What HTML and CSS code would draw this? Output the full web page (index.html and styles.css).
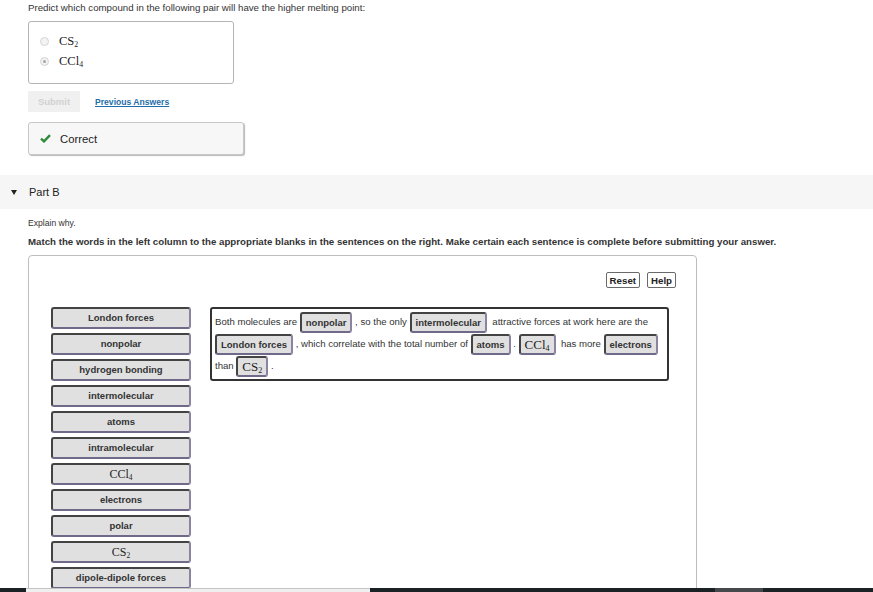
FILE: index.html
```html
<!DOCTYPE html>
<html lang="en">
<head>
    <meta charset="UTF-8">
    <title>Part B - Melting point</title>
    <link rel="stylesheet" href="styles.css">
</head>
<body>
    <div class="part-a">
        <p class="prompt">Predict which compound in the following pair will have the higher melting point:</p>

        <div class="choices">
            <div class="choice">
                <span class="radio"></span>
                <span class="chem">CS<sub>2</sub></span>
            </div>
            <div class="choice">
                <span class="radio checked"></span>
                <span class="chem">CCl<sub>4</sub></span>
            </div>
        </div>

        <div class="actions">
            <button class="submit" disabled>Submit</button>
            <a href="#" class="prev-link">Previous Answers</a>
        </div>

        <div class="feedback">
            <svg class="check" width="11" height="9" viewBox="0 0 11 9">
                <path d="M1 4.6 L4 7.4 L10 1.2" fill="none" stroke="#2f8a3c" stroke-width="2.4"/>
            </svg>
            <span>Correct</span>
        </div>
    </div>

    <div class="part-header">
        <span class="caret"></span>
        <span>Part B</span>
    </div>

    <div class="part-b">
        <p class="explain">Explain why.</p>
        <p class="instructions">Match the words in the left column to the appropriate blanks in the sentences on the right. Make certain each sentence is complete before submitting your answer.</p>

        <div class="match-area">
            <div class="toolbar">
                <button class="tool-btn">Reset</button>
                <button class="tool-btn">Help</button>
            </div>

            <div class="match-body">
                <div class="word-bank">
                    <div class="label">London forces</div>
                    <div class="label">nonpolar</div>
                    <div class="label">hydrogen bonding</div>
                    <div class="label">intermolecular</div>
                    <div class="label">atoms</div>
                    <div class="label">intramolecular</div>
                    <div class="label chem-label">CCl<sub>4</sub></div>
                    <div class="label">electrons</div>
                    <div class="label">polar</div>
                    <div class="label chem-label">CS<sub>2</sub></div>
                    <div class="label">dipole-dipole forces</div>
                </div>

                <div class="sentence">
                    Both molecules are <span class="blank">nonpolar</span> , so the only <span class="blank">intermolecular</span> &nbsp;attractive forces at work here are the
                    <span class="blank">London forces</span> , which correlate with the total number of <span class="blank">atoms</span> . <span class="blank chem-blank">CCl<sub>4</sub></span> &nbsp;has more <span class="blank">electrons</span>
                    than <span class="blank chem-blank">CS<sub>2</sub></span> .
                </div>
            </div>
        </div>
    </div>

    <div class="bottom-bar">
        <span class="seg dark" style="width: 26px"></span>
        <span class="seg light" style="width: 344px"></span>
        <span class="seg dark" style="width: 345px"></span>
        <span class="seg grey" style="width: 48px"></span>
        <span class="seg dark rest"></span>
    </div>
</body>
</html>
```

FILE: styles.css
```css
* {
    margin: 0;
    padding: 0;
    box-sizing: border-box;
}

body {
    font-family: 'Liberation Sans', Arial, sans-serif;
    color: #333333;
    background-color: #ffffff;
    overflow: hidden;
}

.part-a {
    padding: 2px 28px 0;
}

.prompt {
    font-size: 9.7px;
    line-height: 11px;
    color: #333333;
}

.choices {
    width: 206px;
    height: 63px;
    margin-top: 8px;
    border: 1px solid #b5b5b5;
    border-radius: 3px;
    padding: 9px 0 0 11px;
}

.choice {
    display: flex;
    align-items: center;
    height: 20px;
}

.radio {
    width: 9px;
    height: 9px;
    border-radius: 50%;
    border: 1px solid #d4d4d4;
    background-color: #f3f3f3;
    margin-right: 10px;
    position: relative;
}

.radio.checked::after {
    content: '';
    position: absolute;
    left: 2px;
    top: 2px;
    width: 3px;
    height: 3px;
    border-radius: 50%;
    background-color: #a5a5a5;
}

.chem {
    font-family: 'Liberation Serif', 'Times New Roman', serif;
    font-size: 12.5px;
    color: #222222;
}

sub {
    font-size: 0.62em;
    vertical-align: -0.25em;
    line-height: 0;
}

.actions {
    display: flex;
    align-items: center;
    margin-top: 7px;
}

.submit {
    width: 52px;
    height: 21px;
    border: none;
    background-color: #f0f0f0;
    color: #d2d2d2;
    font-family: 'Liberation Sans', Arial, sans-serif;
    font-size: 9.5px;
    font-weight: bold;
}

.prev-link {
    margin-left: 15px;
    font-size: 8.6px;
    font-weight: bold;
    color: #1f6ea8;
    text-decoration: underline;
}

.feedback {
    display: flex;
    align-items: center;
    width: 216px;
    height: 33px;
    margin-top: 10px;
    padding-left: 11px;
    background-color: #f7f7f7;
    border: 1px solid #c8c8c8;
    border-radius: 3px;
    box-shadow: 1px 1px 1px #b8b8b8;
    font-size: 11.3px;
    color: #222222;
}

.check {
    margin-right: 9px;
}

.part-header {
    display: flex;
    align-items: center;
    height: 34px;
    margin-top: 20px;
    background-color: #f6f6f6;
    font-size: 11px;
    color: #222222;
}

.caret {
    width: 0;
    height: 0;
    margin: 0 12px 0 11px;
    border-left: 3.5px solid transparent;
    border-right: 3.5px solid transparent;
    border-top: 5px solid #222222;
}

.part-b {
    padding: 9px 28px 0;
}

.explain {
    font-size: 8.6px;
    line-height: 10px;
}

.instructions {
    margin-top: 9px;
    font-size: 9.7px;
    line-height: 10px;
    font-weight: bold;
}

.match-area {
    width: 669px;
    height: 400px;
    margin-top: 8px;
    border: 1px solid #bdbdbd;
    border-radius: 4px;
    padding: 16px 20px 0 22px;
}

.toolbar {
    display: flex;
    justify-content: flex-end;
    gap: 7px;
}

.tool-btn {
    height: 16px;
    padding: 0 3px;
    background-color: #ffffff;
    border: 1px solid #6a6a6a;
    border-radius: 2px;
    font-family: 'Liberation Sans', Arial, sans-serif;
    font-size: 9.7px;
    font-weight: bold;
    color: #222222;
}

.match-body {
    display: flex;
    align-items: flex-start;
    gap: 19px;
    margin-top: 19px;
}

.word-bank {
    display: flex;
    flex-direction: column;
    gap: 4px;
}

.label,
.blank {
    background-color: #e0e0e0;
    border: 2px solid;
    border-color: #434343 #8b83a0 #70698a #434343;
    border-radius: 3px;
    font-size: 9.5px;
    font-weight: bold;
    color: #333333;
}

.label {
    width: 140px;
    height: 22px;
    line-height: 18px;
    text-align: center;
}

.chem-label {
    font-family: 'Liberation Serif', 'Times New Roman', serif;
    font-size: 12px;
    font-weight: normal;
    color: #222222;
}

.sentence {
    width: 459px;
    height: 74px;
    border: 2px solid #333333;
    border-radius: 3px;
    padding: 2px 3px;
    font-size: 9.6px;
    line-height: 22px;
    color: #333333;
}

.blank {
    display: inline-block;
    height: 21px;
    line-height: 17px;
    padding: 0 4px;
    vertical-align: middle;
}

.chem-blank {
    font-family: 'Liberation Serif', 'Times New Roman', serif;
    font-size: 13px;
    font-weight: normal;
    color: #222222;
}

.bottom-bar {
    position: fixed;
    left: 0;
    bottom: 0;
    width: 100%;
    height: 4px;
    display: flex;
}

.seg {
    height: 4px;
}

.seg.dark {
    background-color: #1b2226;
}

.seg.light {
    background-color: #f0f0f0;
    border-top: 1px solid #c4c4c4;
}

.seg.grey {
    background-color: #45494c;
}

.seg.rest {
    flex: 1;
}
```
